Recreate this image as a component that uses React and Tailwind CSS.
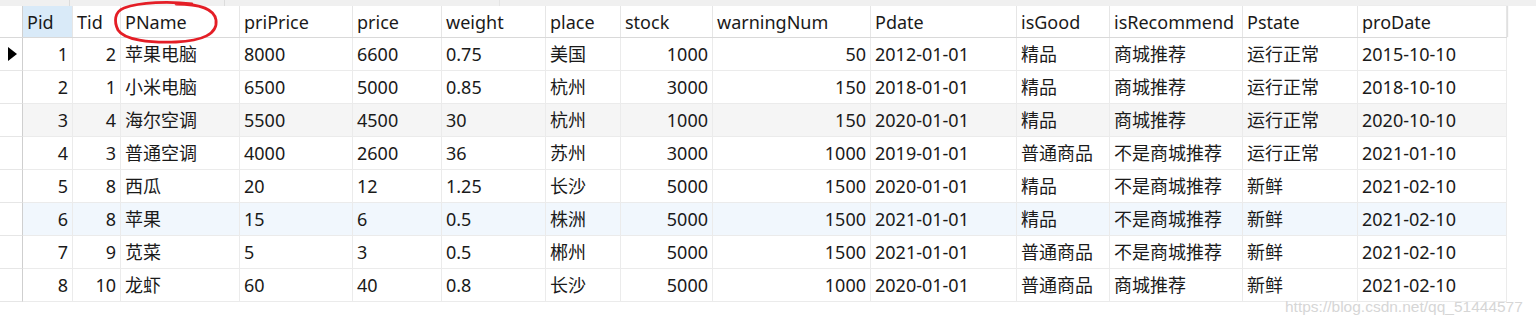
import React from "react";

const cols = [
  { name: "Pid", right: true },
  { name: "Tid", right: true },
  { name: "PName" },
  { name: "priPrice" },
  { name: "price" },
  { name: "weight" },
  { name: "place" },
  { name: "stock", right: true },
  { name: "warningNum", right: true },
  { name: "Pdate" },
  { name: "isGood" },
  { name: "isRecommend" },
  { name: "Pstate" },
  { name: "proDate" },
];

const rows = [
  ["1", "2", "苹果电脑", "8000", "6600", "0.75", "美国", "1000", "50", "2012-01-01", "精品", "商城推荐", "运行正常", "2015-10-10"],
  ["2", "1", "小米电脑", "6500", "5000", "0.85", "杭州", "3000", "150", "2018-01-01", "精品", "商城推荐", "运行正常", "2018-10-10"],
  ["3", "4", "海尔空调", "5500", "4500", "30", "杭州", "1000", "150", "2020-01-01", "精品", "商城推荐", "运行正常", "2020-10-10"],
  ["4", "3", "普通空调", "4000", "2600", "36", "苏州", "3000", "1000", "2019-01-01", "普通商品", "不是商城推荐", "运行正常", "2021-01-10"],
  ["5", "8", "西瓜", "20", "12", "1.25", "长沙", "5000", "1500", "2020-01-01", "精品", "不是商城推荐", "新鲜", "2021-02-10"],
  ["6", "8", "苹果", "15", "6", "0.5", "株洲", "5000", "1500", "2021-01-01", "精品", "不是商城推荐", "新鲜", "2021-02-10"],
  ["7", "9", "苋菜", "5", "3", "0.5", "郴州", "5000", "1500", "2021-01-01", "普通商品", "不是商城推荐", "新鲜", "2021-02-10"],
  ["8", "10", "龙虾", "60", "40", "0.8", "长沙", "5000", "1000", "2020-01-01", "普通商品", "商城推荐", "新鲜", "2021-02-10"],
];

const gridCols =
  "grid grid-cols-[23px_50px_48px_119px_113px_89px_104px_75px_92px_158px_146px_93px_133px_115px_149px]";

function rowBg(i) {
  if (i === 2) return "bg-[#f5f5f5]";
  if (i === 5) return "bg-[#f1f7fd]";
  return "bg-white";
}

export default function App() {
  return (
    <div
      className="relative w-[1536px] h-[323px] bg-white overflow-hidden text-[18px] text-[#1a1a1a]"
      style={{ fontFamily: '"Noto Sans", "Noto Sans CJK SC", sans-serif' }}
    >
      {/* top strip */}
      <div className="h-[6px] bg-[#f0f0f0] flex">
        <div className="w-[70px] border-r border-[#dcdcdc]" />
        <div className="w-[155px] border-r border-[#dcdcdc]" />
        <div className="w-[275px] border-r border-[#e4e4e4]" />
      </div>

      <div className="w-[1507px]">
        {/* header */}
        <div className={`${gridCols} h-[32px] border-b border-[#d9d9d9]`}>
          <div className="bg-white border-r border-[#d0d0d0]" />
          {cols.map((c, i) => (
            <div
              key={c.name}
              className={`flex items-center px-[4px] border-r border-[#e6e6e6] leading-none whitespace-nowrap ${
                i === 0 ? "bg-[#d9eaf8]" : "bg-white"
              } ${i === cols.length - 1 ? "border-[#d6d6d6] shadow-[1px_0_1px_#e0e0e0]" : ""}`}
            >
              {c.name}
            </div>
          ))}
        </div>

        {/* rows */}
        {rows.map((r, ri) => (
          <div key={ri} className={`${gridCols} h-[33px]`}>
            <div className="bg-white border-r border-[#cfcfcf] border-b border-b-[#e6e6e6] flex items-center pl-[8px]">
              {ri === 0 && (
                <svg width="9" height="14" viewBox="0 0 9 14">
                  <path d="M0 0 L9 7 L0 14 Z" fill="#000" />
                </svg>
              )}
            </div>
            {r.map((v, ci) => (
              <div
                key={ci}
                className={`flex items-center px-[4px] border-r border-b border-[#ebebeb] leading-none whitespace-nowrap ${rowBg(
                  ri
                )} ${ci === 0 && ri === 0 ? "bg-[#dcebf8]" : ""} ${cols[ci].right ? "justify-end" : ""}`}
              >
                {v}
              </div>
            ))}
          </div>
        ))}
      </div>

      {/* red annotation circle */}
      <svg
        className="absolute left-[110px] top-0 pointer-events-none"
        width="115"
        height="46"
        viewBox="0 0 115 46"
      >
        <path
          d="M82 4 C 60 1, 30 2, 14 8 C 4 12, 4 22, 8 30 C 14 40, 40 43, 66 42 C 92 41, 108 34, 106 20 C 104 8, 88 4, 66 4"
          fill="none"
          stroke="#e41e26"
          strokeWidth="2.8"
          strokeLinecap="round"
        />
      </svg>

      {/* watermark */}
      <div
        className="absolute left-[1285px] top-[295px] text-[15.5px] text-[#d6d6d6]"
        style={{ fontFamily: '"Liberation Sans", Arial, sans-serif' }}
      >
        https://blog.csdn.net/qq_51444577
      </div>
    </div>
  );
}
